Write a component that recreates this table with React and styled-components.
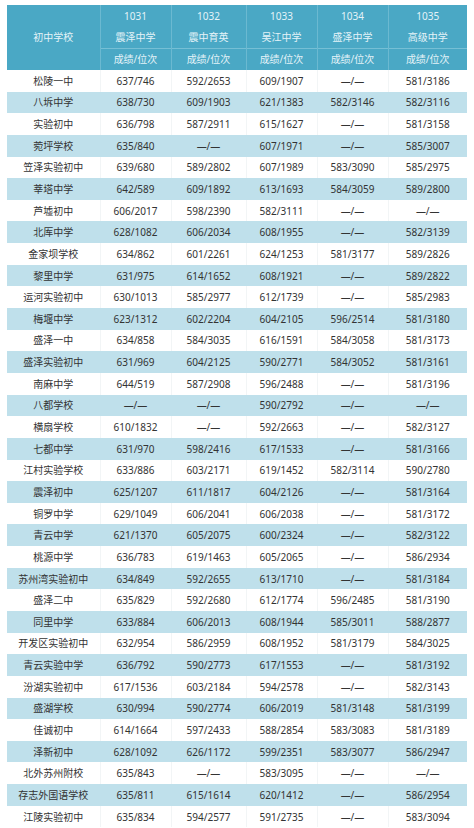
import React from "react";
import styled, { createGlobalStyle } from "styled-components";

const GlobalStyle = createGlobalStyle`
  html, body {
    margin: 0;
    padding: 0;
    background: #ffffff;
  }
  body {
    font-family: "Noto Sans", "Noto Sans CJK SC", sans-serif;
  }
`;

const schools = [
  { code: "1031", name: "震泽中学" },
  { code: "1032", name: "震中育英" },
  { code: "1033", name: "吴江中学" },
  { code: "1034", name: "盛泽中学" },
  { code: "1035", name: "高级中学" },
];

const widths = [93, 71, 75, 71, 71, 79];

const D = "—/—";

const rows = [
  ["松陵一中", "637/746", "592/2653", "609/1907", D, "581/3186"],
  ["八坼中学", "638/730", "609/1903", "621/1383", "582/3146", "582/3116"],
  ["实验初中", "636/798", "587/2911", "615/1627", D, "581/3158"],
  ["菀坪学校", "635/840", D, "607/1971", D, "585/3007"],
  ["笠泽实验初中", "639/680", "589/2802", "607/1989", "583/3090", "585/2975"],
  ["莘塔中学", "642/589", "609/1892", "613/1693", "584/3059", "589/2800"],
  ["芦墟初中", "606/2017", "598/2390", "582/3111", D, D],
  ["北厍中学", "628/1082", "606/2034", "608/1955", D, "582/3139"],
  ["金家坝学校", "634/862", "601/2261", "624/1253", "581/3177", "589/2826"],
  ["黎里中学", "631/975", "614/1652", "608/1921", D, "589/2822"],
  ["运河实验初中", "630/1013", "585/2977", "612/1739", D, "585/2983"],
  ["梅堰中学", "623/1312", "602/2204", "604/2105", "596/2514", "581/3180"],
  ["盛泽一中", "634/858", "584/3035", "616/1591", "584/3058", "581/3173"],
  ["盛泽实验初中", "631/969", "604/2125", "590/2771", "584/3052", "581/3161"],
  ["南麻中学", "644/519", "587/2908", "596/2488", D, "581/3196"],
  ["八都学校", D, D, "590/2792", D, D],
  ["横扇学校", "610/1832", D, "592/2663", D, "582/3127"],
  ["七都中学", "631/970", "598/2416", "617/1533", D, "581/3166"],
  ["江村实验学校", "633/886", "603/2171", "619/1452", "582/3114", "590/2780"],
  ["震泽初中", "625/1207", "611/1817", "604/2126", D, "581/3164"],
  ["铜罗中学", "629/1049", "606/2041", "606/2038", D, "581/3172"],
  ["青云中学", "621/1370", "605/2075", "600/2324", D, "582/3122"],
  ["桃源中学", "636/783", "619/1463", "605/2065", D, "586/2934"],
  ["苏州湾实验初中", "634/849", "592/2655", "613/1710", D, "581/3184"],
  ["盛泽二中", "635/829", "592/2680", "612/1774", "596/2485", "581/3190"],
  ["同里中学", "633/884", "606/2013", "608/1944", "585/3011", "588/2877"],
  ["开发区实验初中", "632/954", "586/2959", "608/1952", "581/3179", "584/3025"],
  ["青云实验中学", "636/792", "590/2773", "617/1553", D, "581/3192"],
  ["汾湖实验初中", "617/1536", "603/2184", "594/2578", D, "582/3143"],
  ["盛湖学校", "630/994", "590/2774", "606/2019", "581/3148", "581/3199"],
  ["佳诚初中", "614/1664", "597/2433", "588/2854", "583/3083", "581/3189"],
  ["泽新初中", "628/1092", "626/1172", "599/2351", "583/3077", "586/2947"],
  ["北外苏州附校", "635/843", D, "583/3095", D, D],
  ["存志外国语学校", "635/811", "615/1614", "620/1412", D, "586/2954"],
  ["江陵实验初中", "635/834", "594/2577", "591/2735", D, "583/3094"],
];

const Page = styled.div`
  padding: 5px 7px 0 7px;
`;

const Table = styled.table`
  width: 460px;
  table-layout: fixed;
  border-collapse: collapse;
  border-spacing: 0;
  font-size: 10px;
  line-height: 1;
`;

const HeadCell = styled.th`
  height: 21.33px;
  padding: 0;
  background: #4aa8c5;
  color: #e4f3f8;
  font-weight: 400;
  text-align: center;
  vertical-align: middle;
  border-left: ${(p) => (p.$first ? "none" : "1px solid #6bb9d1")};
  border-top: ${(p) => (p.$ruled ? "1px solid #76bfd5" : "none")};
`;

const Row = styled.tr`
  height: 21.65px;
  background: ${(p) => (p.$striped ? "#bfe0eb" : "#ffffff")};
`;

const Cell = styled.td`
  padding: 0;
  color: #333333;
  text-align: center;
  vertical-align: middle;
  white-space: nowrap;
  border-left: ${(p) =>
    p.$first ? "none" : p.$striped ? "1px solid #bfe0eb" : "1px solid #f2f5f6"};
`;

export default function App() {
  return (
    <Page>
      <GlobalStyle />
      <Table>
        <colgroup>
          {widths.map((w, i) => (
            <col key={i} style={{ width: w }} />
          ))}
        </colgroup>
        <thead>
          <tr>
            <HeadCell $first rowSpan={3}>
              初中学校
            </HeadCell>
            {schools.map((s) => (
              <HeadCell key={s.code}>{s.code}</HeadCell>
            ))}
          </tr>
          <tr>
            {schools.map((s) => (
              <HeadCell key={s.code}>{s.name}</HeadCell>
            ))}
          </tr>
          <tr>
            {schools.map((s) => (
              <HeadCell key={s.code} $ruled>
                成绩/位次
              </HeadCell>
            ))}
          </tr>
        </thead>
        <tbody>
          {rows.map((r, i) => (
            <Row key={r[0]} $striped={i % 2 === 1}>
              {r.map((v, j) => (
                <Cell key={j} $first={j === 0} $striped={i % 2 === 1}>
                  {v}
                </Cell>
              ))}
            </Row>
          ))}
        </tbody>
      </Table>
    </Page>
  );
}
